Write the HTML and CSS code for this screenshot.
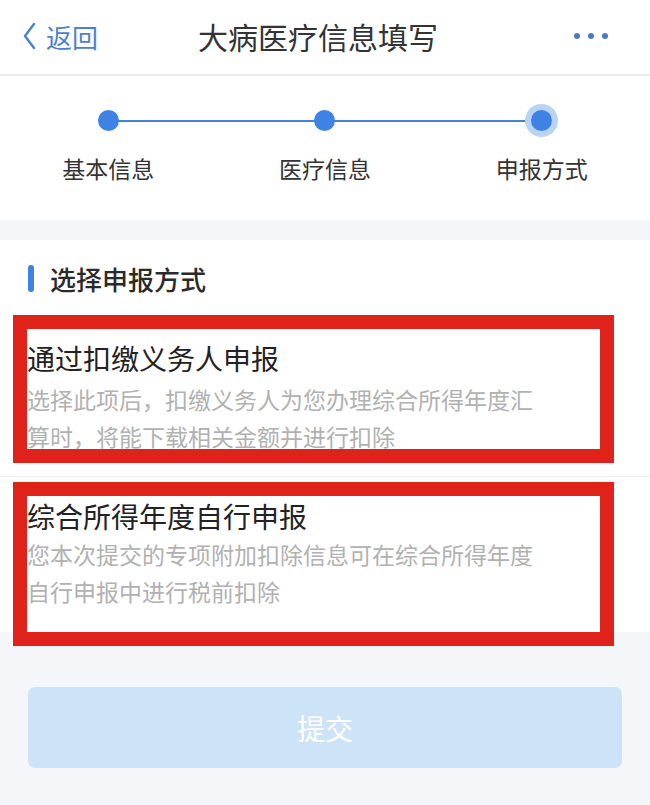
FILE: index.html
```html
<html lang="zh-CN">
  <head>
    <meta charset="UTF-8" />
    <meta name="viewport" content="width=device-width, initial-scale=1.0" />
    <title>大病医疗信息填写</title>
    <link rel="stylesheet" href="styles.css">
  </head>
  <body>
    <div class="nav-bar">
      <div class="back">
        <svg class="back-icon" width="14" height="28" viewBox="0 0 14 28">
          <path d="M12 2 L3 14 L12 26" fill="none" stroke="#4a82d0" stroke-width="2.4" stroke-linecap="round" stroke-linejoin="round" />
        </svg>
        <span>返回</span>
      </div>
      <div class="nav-title">大病医疗信息填写</div>
      <div class="more">
        <span></span><span></span><span></span>
      </div>
    </div>

    <div class="steps">
      <div class="step">
        <div class="dot-wrap"><div class="dot"></div></div>
        <div class="step-label">基本信息</div>
      </div>
      <div class="step">
        <div class="dot-wrap"><div class="dot"></div></div>
        <div class="step-label">医疗信息</div>
      </div>
      <div class="step current">
        <div class="dot-wrap"><div class="dot"></div></div>
        <div class="step-label">申报方式</div>
      </div>
    </div>

    <div class="panel">
      <div class="panel-title">
        <span class="bar"></span>
        <span>选择申报方式</span>
      </div>
      <div class="option first">
        <div class="option-box">
          <div class="option-name">通过扣缴义务人申报</div>
          <div class="option-desc">选择此项后，扣缴义务人为您办理综合所得年度汇<br />算时，将能下载相关金额并进行扣除</div>
        </div>
      </div>
      <div class="option last">
        <div class="option-box">
          <div class="option-name">综合所得年度自行申报</div>
          <div class="option-desc">您本次提交的专项附加扣除信息可在综合所得年度<br />自行申报中进行税前扣除</div>
        </div>
      </div>
    </div>

    <div class="footer">
      <button class="submit" disabled>提交</button>
    </div>
  </body>
</html>
```

FILE: styles.css
```css
* {
  box-sizing: border-box;
}

body {
  margin: 0;
  background-color: #f4f6fa;
  font-family: "Noto Sans CJK SC", "Noto Sans", sans-serif;
  color: #333;
}

.nav-bar {
  height: 76px;
  display: grid;
  grid-template-columns: 1fr auto 1fr;
  align-items: center;
  background-color: white;
  border-bottom: 2px solid #ececec;
  padding: 0 42px 2px 22px;
}

.back {
  display: flex;
  align-items: center;
  color: #4a82d0;
  font-size: 26px;
}

.back-icon {
  margin-right: 10px;
}

.nav-title {
  font-size: 30px;
  color: #333;
  margin-left: 6px;
}

.more {
  justify-self: end;
  display: flex;
  gap: 8px;
}

.more span {
  width: 6px;
  height: 6px;
  border-radius: 50%;
  background-color: #4a7bbd;
}

.steps {
  display: grid;
  grid-template-columns: repeat(3, 1fr);
  height: 144px;
  padding-top: 28px;
  background-color: white;
}

.step {
  position: relative;
  display: flex;
  flex-direction: column;
  align-items: center;
}

.step:not(:last-child)::after {
  content: "";
  position: absolute;
  top: 16px;
  left: 50%;
  width: 100%;
  height: 2px;
  background-color: #4a7fd6;
}

.dot-wrap {
  position: relative;
  z-index: 1;
  width: 33px;
  height: 33px;
  display: flex;
  align-items: center;
  justify-content: center;
  border-radius: 50%;
}

.step.current .dot-wrap {
  background-color: #b9d3f4;
}

.dot {
  width: 21px;
  height: 21px;
  border-radius: 50%;
  background-color: #3f82e6;
}

.step-label {
  margin-top: 15px;
  font-size: 23px;
  line-height: 32px;
  color: #333;
}

.panel {
  display: flow-root;
  margin-top: 20px;
  background-color: white;
}

.panel-title {
  height: 75px;
  display: flex;
  align-items: center;
  padding: 1px 0 0 28px;
  font-size: 26px;
  font-weight: 500;
  color: #2a2a2a;
}

.panel-title .bar {
  width: 6px;
  height: 27px;
  border-radius: 3px;
  background-color: #3f82e6;
  margin-right: 16px;
}

.option {
  border-top: 1px solid #eeeeee;
}

.option.first {
  border-top: none;
  padding-bottom: 13px;
}

.option.last {
  padding-top: 5px;
  margin-bottom: -14px;
}

.option-box {
  margin: 0 36px 0 13px;
  border: 14px solid #e0231a;
  background-color: white;
}

.option.first .option-box {
  height: 148px;
  padding-top: 10px;
}

.option.last .option-box {
  height: 164px;
  padding-top: 1px;
}

.option-name {
  font-size: 28px;
  line-height: 38px;
  color: #222;
}

.option-desc {
  margin-top: 4px;
  font-size: 23px;
  line-height: 37px;
  color: #b1b1b1;
  white-space: nowrap;
}

.option.last .option-desc {
  margin-top: 1px;
}

.footer {
  padding: 55px 28px 0 28px;
}

.submit {
  width: 100%;
  height: 81px;
  border: none;
  border-radius: 7px;
  background-color: #cde4f8;
  color: white;
  font-family: inherit;
  font-size: 28px;
}
```
